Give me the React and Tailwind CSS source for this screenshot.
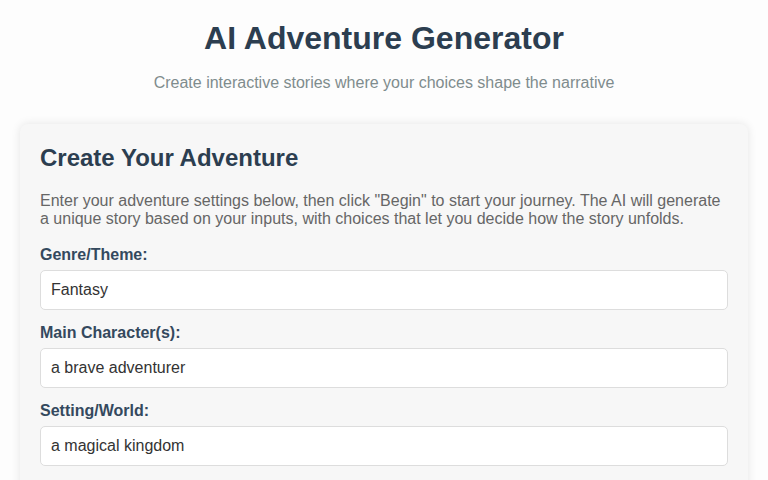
export default function App() {
  const fields = [
    { label: "Genre/Theme:", value: "Fantasy" },
    { label: "Main Character(s):", value: "a brave adventurer" },
    { label: "Setting/World:", value: "a magical kingdom" },
  ];

  return (
    <div className="min-h-screen bg-[#fdfdfd] p-5 font-['Liberation_Sans',Arial,sans-serif]">
      {/* Header */}
      <header className="text-center mb-8">
        <h1 className="text-[32px] leading-[37px] font-bold text-[#2c3e50]">
          AI Adventure Generator
        </h1>
        <p className="mt-[17px] text-base leading-[18px] text-[#7f8c8d]">
          Create interactive stories where your choices shape the narrative
        </p>
      </header>

      {/* Setup card */}
      <div className="bg-[#f7f7f7] rounded-lg shadow-[0_0_10px_rgba(0,0,0,0.1)] p-5">
        <h2 className="text-2xl leading-[28px] font-bold text-[#2c3e50]">
          Create Your Adventure
        </h2>
        <p className="mt-5 mb-[18px] text-base leading-[18px] text-[#666666]">
          Enter your adventure settings below, then click "Begin" to start your
          journey. The AI will generate a unique story based on your inputs,
          with choices that let you decide how the story unfolds.
        </p>

        {fields.map((f) => (
          <div key={f.label} className="mb-[14px]">
            <label className="block mb-[6px] text-base leading-[18px] font-bold text-[#34495e]">
              {f.label}
            </label>
            <input
              type="text"
              defaultValue={f.value}
              className="w-full h-10 px-[10px] text-base text-[#333333] bg-white border border-[#dddddd] rounded-[5px] outline-none"
            />
          </div>
        ))}
      </div>
    </div>
  );
}
